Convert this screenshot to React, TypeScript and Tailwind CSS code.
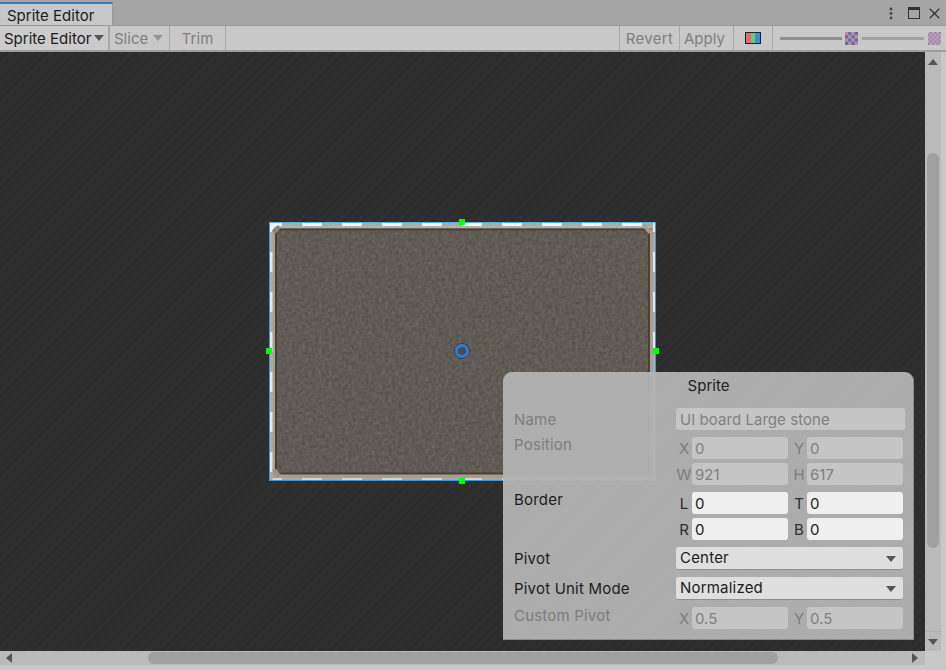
import React from "react";

const Sep = () => <div className="w-[1px] h-full bg-[#a8a8a8]" />;

function Caret({ color = "#555555", dir = "down", className = "" }: { color?: string; dir?: "down" | "up" | "left" | "right"; className?: string }) {
  const pts = { down: "0,0 10,0 5,6", up: "0,6 10,6 5,0", left: "6,0 6,10 0,5", right: "0,0 0,10 6,5" }[dir];
  const vb = dir === "left" || dir === "right" ? "0 0 6 10" : "0 0 10 6";
  const cls = dir === "left" || dir === "right" ? "w-[6px] h-[10px]" : "w-[10px] h-[6px]";
  return (
    <svg viewBox={vb} className={`${cls} ${className}`}>
      <polygon points={pts} fill={color} />
    </svg>
  );
}

function Checker({ a, b, n }: { a: string; b: string; n: number }) {
  const s = 13 / n;
  const cells = Array.from({ length: n }, (_, i) => i);
  return (
    <svg viewBox="0 0 13 13" className="w-[13px] h-[13px]">
      <rect width="13" height="13" fill="#a99fb0" />
      {cells.map((r) =>
        cells.map((c) => (
          <rect key={`${r}-${c}`} x={c * s} y={r * s} width={s} height={s} fill={(r + c) % 2 ? a : b} />
        ))
      )}
    </svg>
  );
}

function Field({ label, value, on, w = "w-[96px]" }: { label: string; value: string; on?: boolean; w?: string }) {
  return (
    <div className="flex items-center">
      <span className={`w-[16px] pt-[2px] text-center text-[15px] ${on ? "text-[#2e2e2e]" : "text-[#7d7d7d]"}`}>{label}</span>
      <div
        className={`${w} h-[22px] rounded-[3px] pl-[3px] pt-[2px] flex items-center text-[15px] ${
          on ? "bg-[#efefef] text-[#1a1a1a]" : "bg-[#c5c5c5] text-[#808080]"
        }`}
      >
        {value}
      </div>
    </div>
  );
}

function Row({ label, on, mt, lift = "", children }: { label?: string; on?: boolean; mt: string; lift?: string; children: React.ReactNode }) {
  return (
    <div className={`flex ${mt} h-[22px] items-center`}>
      <div className={`w-[162px] text-[15px] tracking-[0.2px] ${lift} ${on ? "text-[#1c1c1c]" : "text-[#7d7d7d]"}`}>{label}</div>
      <div className="flex gap-[3px]">{children}</div>
    </div>
  );
}

function Drop({ value }: { value: string }) {
  return (
    <div className="w-[227px] h-[23px] rounded-[3px] bg-[#dfdfdf] border-b border-[#8e8e8e] text-[#1c1c1c] text-[15px] tracking-[0.2px] flex items-center justify-between pl-[4px] pr-[7px] pt-[2px]">
      {value}
      <Caret />
    </div>
  );
}

function Sprite() {
  const w = 387;
  const h = 259;
  return (
    <svg viewBox={`0 0 ${w} ${h}`} className="w-[387px] h-[259px]">
      <defs>
        <filter id="stone" x="0" y="0" width="100%" height="100%" colorInterpolationFilters="sRGB">
          <feTurbulence type="fractalNoise" baseFrequency="0.3" numOctaves="4" seed="4" />
          <feColorMatrix type="matrix" values="0.14 0 0 0 0.305  0.14 0 0 0 0.285  0.14 0 0 0 0.26  0 0 0 0 1" />
          <feComposite in2="SourceAlpha" operator="in" />
        </filter>
        <pattern id="dashL" width="40" height="40" patternUnits="userSpaceOnUse" y="10">
          <rect width="40" height="20" fill="#ababa8" />
          <rect y="20" width="40" height="20" fill="#e8e8e8" />
        </pattern>
        <pattern id="dashH" width="40" height="40" patternUnits="userSpaceOnUse" x="-7">
          <rect width="20" height="40" fill="#f4f6f7" />
          <rect x="20" width="20" height="40" fill="#a3acae" />
        </pattern>
      </defs>
      <rect width={w} height={h} fill="#a89f92" />
      <rect x="1" y="1" width={w - 2} height="3" fill="url(#dashH)" />
      <rect x="1" y={h - 3} width={w - 2} height="2" fill="url(#dashH)" opacity="0.6" />
      <rect x="1" y="1" width="2.5" height={h - 2} fill="url(#dashL)" />
      <rect x={w - 3} y="1" width="2.5" height={h - 2} fill="url(#dashL)" />
      <rect x="3.5" y="4" width={w - 7} height="2" fill="#b7afa3" />
      <rect x="3.5" y="6" width={w - 7} height="2" fill="#91887a" />
      <rect x="3.5" y={h - 10} width={w - 7} height="7" fill="#a69d8f" />
      <rect x="6" y="6.5" width={w - 12} height={h - 13} fill="#4b4034" rx="2" />
      <rect x="8" y="8.5" width={w - 16} height={h - 17} fill="#5e574f" rx="3" filter="url(#stone)" />
      <polygon points="3,9 9,3 12,6 6,12" fill="#8c8478" />
      <polygon points="1,5 5,1 10,1 1,10" fill="#f4f4f4" />
      <polygon points={`${w - 11},2 ${w - 5},9 ${w - 7},12 ${w - 13},5`} fill="#a59c90" />
      <polygon points={`3,${h - 12} 9,${h - 3} 12,${h - 6} 7,${h - 12}`} fill="#9b9285" />
      <rect x="0" y="0" width="1" height={h} fill="#3f97d6" />
      <rect x="0" y="0" width={w} height="1" fill="#57aee0" />
      <rect x={w - 1} y="0" width="1" height={h} fill="#3f97d6" />
      <rect x="0" y={h - 1} width={w} height="1" fill="#3f97d6" />
    </svg>
  );
}

export default function App() {
  return (
    <div className="w-[946px] h-[670px] overflow-hidden flex flex-col bg-[#c8c8c8] font-['Inter',sans-serif]">
      {/* Tab strip */}
      <div className="h-[26px] shrink-0 bg-[#a5a5a5] flex items-end justify-between border-b border-[#999999]">
        <div className="w-[113px] h-[23px] bg-[#c8c8c8] border-t-2 border-[#3a79bb] border-r border-r-[#989898] pl-[7px] pt-[3px] text-[15px] text-[#1c1c1c] flex items-center">
          Sprite Editor
        </div>
        <div className="flex items-center h-[24px] mr-[6px] gap-[7px]">
          <svg viewBox="0 0 4 13" className="w-[4px] h-[13px] mr-[6px]">
            <circle cx="2" cy="2" r="1.4" fill="#444" />
            <circle cx="2" cy="6.5" r="1.4" fill="#444" />
            <circle cx="2" cy="11" r="1.4" fill="#444" />
          </svg>
          <svg viewBox="0 0 12 12" className="w-[12px] h-[12px] ml-[2px]">
            <rect x="0.5" y="0.5" width="11" height="11" fill="none" stroke="#333" />
            <rect x="0.5" y="0.5" width="11" height="2.5" fill="#333" />
          </svg>
          <svg viewBox="0 0 11 11" className="w-[11px] h-[11px] ml-[2px]">
            <path d="M0.7 0.7 L10.3 10.3 M10.3 0.7 L0.7 10.3" stroke="#333" strokeWidth="1.3" />
          </svg>
        </div>
      </div>

      {/* Toolbar */}
      <div className="h-[26px] shrink-0 flex items-center bg-[#c8c8c8] border-b-2 border-[#9c9c9c] text-[15px]">
        <div className="w-[108px] h-full bg-[#cbcbcb] flex items-center pl-[4px] pt-[3px] text-[#1c1c1c] gap-[3px]">
          Sprite Editor
          <Caret className="mb-[3px]" />
        </div>
        <div className="w-[2px] h-full bg-[#a8a8a8]" />
        <div className="w-[59px] h-full flex items-center pl-[4px] pt-[3px] text-[#7f7f7f] gap-[5px]">
          Slice
          <Caret color="#969696" className="mb-[3px]" />
        </div>
        <Sep />
        <div className="w-[55px] h-full flex items-center justify-center pt-[3px] text-[#7f7f7f] tracking-[0.1px]">Trim</div>
        <Sep />
        <div className="w-[393px] h-full" />
        <Sep />
        <div className="w-[59px] h-full flex items-center justify-center pt-[3px] text-[#7f7f7f] tracking-[0.3px]">Revert</div>
        <Sep />
        <div className="w-[53px] h-full flex items-center pl-[4px] pt-[3px] text-[#7f7f7f]">Apply</div>
        <Sep />
        <div className="w-[38px] h-full flex items-center justify-center">
          <svg viewBox="0 0 16 12" className="w-[16px] h-[12px]" shapeRendering="crispEdges">
            <rect width="16" height="12" fill="#16243a" />
            <rect x="1" y="1" width="5" height="10" fill="#e66a6a" />
            <rect x="6" y="1" width="4" height="10" fill="#5fd07a" />
            <rect x="10" y="1" width="5" height="10" fill="#4a86d8" />
          </svg>
        </div>
        <Sep />
        <div className="flex items-center pl-[7px] h-full">
          <div className="w-[62px] h-[3px] bg-[#8f8f8f]" />
          <div className="ml-[3px]"><Checker a="#6a6aa6" b="#b98ea0" n={4} /></div>
          <div className="ml-[4px] w-[62px] h-[3px] bg-[#a0a0a0]" />
          <div className="ml-[4px]"><Checker a="#8f88b5" b="#c9a5b2" n={6} /></div>
        </div>
      </div>

      {/* Canvas + vertical scrollbar */}
      <div className="flex h-[599px] shrink-0">
        <div className="relative w-[925px] h-full bg-[#2d2d2d] bg-[repeating-linear-gradient(135deg,#2f2f2f_0px,#2f2f2f_4px,#2c2c2c_4px,#2c2c2c_7px)]">
          <div className="absolute left-[269px] top-[170px]">
            <Sprite />
          </div>
          {/* handles */}
          <div className="absolute left-[459px] top-[167px] w-[6px] h-[6px] bg-[#00ff00]" />
          <div className="absolute left-[266px] top-[296px] w-[6px] h-[6px] bg-[#00ff00]" />
          <div className="absolute left-[653px] top-[296px] w-[6px] h-[6px] bg-[#00ff00]" />
          <div className="absolute left-[459px] top-[426px] w-[6px] h-[6px] bg-[#00ff00]" />
          <svg viewBox="0 0 18 18" className="absolute left-[453px] top-[290px] w-[18px] h-[18px]">
            <circle cx="9" cy="9" r="4" fill="#3d3d40" opacity="0.5" />
            <circle cx="9" cy="9" r="7.6" fill="none" stroke="#26303c" strokeWidth="1" opacity="0.7" />
            <circle cx="9" cy="9" r="5.6" fill="none" stroke="#2f78d8" strokeWidth="3" />
          </svg>

          {/* Sprite panel */}
          <div className="absolute left-[503px] top-[320px] w-[411px] h-[268px] rounded-t-[9px] rounded-b-[1px] bg-[#b2b2b2]/96 border-r border-b border-[#8c8c8c] pl-[11px] flex flex-col">
            <div className="h-[28px] mr-[10px] flex items-center justify-center text-[15px] text-[#1c1c1c]">Sprite</div>
            <Row label="Name" mt="mt-[8px]" lift="pt-[2px]">
              <div className="w-[229px] h-[22px] rounded-[3px] bg-[#c5c5c5] text-[#808080] text-[15px] tracking-[0.05px] flex items-center pl-[4px] pt-[2px]">UI board Large stone</div>
            </Row>
            <Row label="Position" mt="mt-[7px]" lift="mb-[6px]">
              <Field label="X" value="0" />
              <Field label="Y" value="0" />
            </Row>
            <Row mt="mt-[4px]">
              <Field label="W" value="921" />
              <Field label="H" value="617" />
            </Row>
            <Row label="Border" on mt="mt-[7px]" lift="mb-[6px]">
              <Field label="L" value="0" on />
              <Field label="T" value="0" on />
            </Row>
            <Row mt="mt-[4px]">
              <Field label="R" value="0" on />
              <Field label="B" value="0" on />
            </Row>
            <Row label="Pivot" on mt="mt-[7px]" lift="pt-[2px]">
              <Drop value="Center" />
            </Row>
            <Row label="Pivot Unit Mode" on mt="mt-[8px]" lift="pt-[2px]">
              <Drop value="Normalized" />
            </Row>
            <Row label="Custom Pivot" mt="mt-[8px]" lift="mb-[4px]">
              <Field label="X" value="0.5" />
              <Field label="Y" value="0.5" />
            </Row>
          </div>
        </div>

        {/* Vertical scrollbar */}
        <div className="w-[16px] h-full bg-[#bababa] flex flex-col items-center">
          <div className="h-[20px] flex items-center"><Caret dir="up" /></div>
          <div className="mt-[81px] w-[12px] h-[395px] rounded-[6px] bg-[#a0a0a0]" />
          <div className="flex-1" />
          <div className="h-[20px] w-full border-t border-[#adadad] flex items-center justify-center"><Caret /></div>
        </div>
        <div className="w-[5px] h-full bg-[#c8c8c8]" />
      </div>

      {/* Horizontal scrollbar */}
      <div className="flex h-[14px] shrink-0">
        <div className="w-[925px] h-full bg-[#bababa] flex items-center">
          <Caret dir="left" className="ml-[6px]" />
          <div className="ml-[136px] w-[630px] h-[12px] rounded-[6px] bg-[#a0a0a0]" />
          <Caret dir="right" className="ml-[134px]" />
        </div>
      </div>
      <div className="h-[5px] shrink-0 bg-[#c8c8c8]" />
    </div>
  );
}
